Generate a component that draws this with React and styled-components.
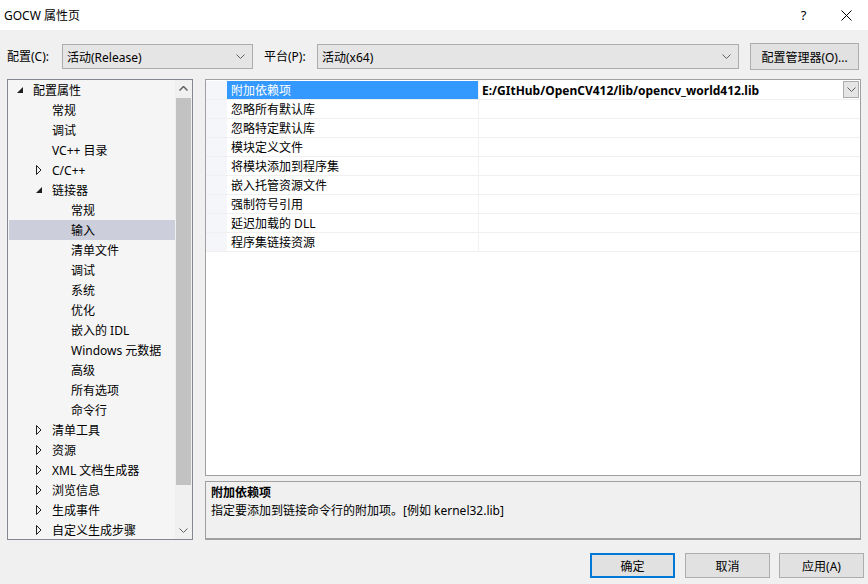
import React from "react";
import styled, { createGlobalStyle } from "styled-components";

const GlobalStyle = createGlobalStyle`
  html, body {
    margin: 0;
    padding: 0;
    background: #f0f0f0;
  }
  * {
    box-sizing: border-box;
  }
`;

const FONT = `"Noto Sans", "Noto Sans CJK SC", sans-serif`;

const Window = styled.div`
  width: 868px;
  height: 584px;
  background: #f0f0f0;
  font-family: ${FONT};
  font-size: 12px;
  color: #000;
  display: flex;
  flex-direction: column;
  overflow: hidden;
`;

const TitleBar = styled.div`
  height: 30px;
  background: #fff;
  display: flex;
  align-items: center;
  padding-left: 4px;
`;

const Title = styled.div`
  flex: 1;
  font-size: 12px;
`;

const TitleButton = styled.div`
  width: 43px;
  height: 30px;
  display: flex;
  align-items: center;
  justify-content: center;
  font-size: 13px;
`;

const Toolbar = styled.div`
  height: 49px;
  padding: 13px 0 0 7px;
  display: flex;
  align-items: flex-start;
`;

const Label = styled.div`
  width: ${({ $w }) => $w}px;
  margin-left: ${({ $ml }) => $ml || 0}px;
  height: 27px;
  line-height: 27px;
`;

const Combo = styled.div`
  width: ${({ $w }) => $w}px;
  height: 25px;
  margin-top: 1px;
  background: #e5e5e5;
  border: 1px solid #acacac;
  display: flex;
  align-items: center;
  padding: 0 7px 0 4px;
`;

const ComboText = styled.div`
  flex: 1;
`;

const Button = styled.div`
  width: ${({ $w }) => $w}px;
  height: ${({ $h }) => $h || 25}px;
  margin-left: ${({ $ml }) => $ml || 0}px;
  background: #e1e1e1;
  border: ${({ $primary }) => ($primary ? "2px solid #0078d7" : "1px solid #adadad")};
  display: flex;
  align-items: center;
  justify-content: center;
`;

const Main = styled.div`
  display: flex;
  gap: 12px;
  padding: 0 7px;
`;

const TreePanel = styled.div`
  width: 186px;
  height: 461px;
  border: 1px solid #828790;
  background: #f5f5f5;
  display: flex;
`;

const TreeList = styled.div`
  flex: 1;
  padding-left: 1px;
  overflow: hidden;
`;

const TreeRow = styled.div`
  height: 20px;
  display: flex;
  align-items: center;
  padding-left: ${({ $level }) => 5 + $level * 19}px;
  background: ${({ $selected }) => ($selected ? "#cccedb" : "transparent")};
  white-space: nowrap;
`;

const Expander = styled.div`
  width: 19px;
  height: 20px;
  display: flex;
  align-items: center;
  padding-left: 3px;
`;

const ScrollBar = styled.div`
  width: 17px;
  background: #f0f0f0;
  display: flex;
  flex-direction: column;
  align-items: center;
`;

const ScrollArrow = styled.div`
  height: 17px;
  width: 17px;
  display: flex;
  align-items: center;
  justify-content: center;
`;

const ScrollThumb = styled.div`
  width: 15px;
  height: 387px;
  margin-top: 1px;
  background: #c2c2c2;
`;

const ScrollTrack = styled.div`
  flex: 1;
`;

const RightColumn = styled.div`
  width: 656px;
  display: flex;
  flex-direction: column;
  gap: 5px;
`;

const GridPanel = styled.div`
  height: 397px;
  border: 1px solid #a0a0a0;
  background: #fff;
  padding-top: 1px;
`;

const GridRow = styled.div`
  display: flex;
  height: 19px;
  border-bottom: 1px solid #f0f0f0;
`;

const Gutter = styled.div`
  width: 21px;
  background: #f4f6fa;
`;

const NameCell = styled.div`
  width: 252px;
  padding: 1px 0 0 4px;
  line-height: 17px;
  background: ${({ $selected }) => ($selected ? "#3399ff" : "#fff")};
  color: ${({ $selected }) => ($selected ? "#fff" : "#000")};
  border-right: 1px solid #f0f0f0;
`;

const ValueCell = styled.div`
  flex: 1;
  display: flex;
  padding-left: 3px;
  font-weight: bold;
`;

const ValueText = styled.div`
  flex: 1;
  padding-top: 1px;
  line-height: 17px;
`;

const DropButton = styled.div`
  width: 16px;
  height: 17px;
  margin-right: 1px;
  background: #e5e5e5;
  border: 1px solid #acacac;
  display: flex;
  align-items: center;
  justify-content: center;
`;

const DescPanel = styled.div`
  height: 59px;
  border: 1px solid #a0a0a0;
  border-bottom-width: 2px;
  padding: 2px 5px;
  line-height: 18px;
`;

const DescTitle = styled.div`
  font-weight: bold;
`;

const Footer = styled.div`
  display: flex;
  justify-content: flex-end;
  padding: 13px 4px 0 0;
`;

const Chevron = ({ color = "#606060" }) => (
  <svg width="9" height="5" viewBox="0 0 9 5">
    <polyline points="0.5,0.5 4.5,4.5 8.5,0.5" fill="none" stroke={color} strokeWidth="1" />
  </svg>
);

const ExpandedIcon = () => (
  <svg width="7" height="7" viewBox="0 0 7 7">
    <polygon points="6,0 6,6 0,6" fill="#1e1e1e" />
  </svg>
);

const CollapsedIcon = () => (
  <svg width="6" height="10" viewBox="0 0 6 10">
    <polygon points="0.5,0.5 5,5 0.5,9.5" fill="none" stroke="#1e1e1e" strokeWidth="1" />
  </svg>
);

const treeItems = [
  { label: "配置属性", level: 0, state: "open" },
  { label: "常规", level: 1 },
  { label: "调试", level: 1 },
  { label: "VC++ 目录", level: 1 },
  { label: "C/C++", level: 1, state: "closed" },
  { label: "链接器", level: 1, state: "open" },
  { label: "常规", level: 2 },
  { label: "输入", level: 2, selected: true },
  { label: "清单文件", level: 2 },
  { label: "调试", level: 2 },
  { label: "系统", level: 2 },
  { label: "优化", level: 2 },
  { label: "嵌入的 IDL", level: 2 },
  { label: "Windows 元数据", level: 2 },
  { label: "高级", level: 2 },
  { label: "所有选项", level: 2 },
  { label: "命令行", level: 2 },
  { label: "清单工具", level: 1, state: "closed" },
  { label: "资源", level: 1, state: "closed" },
  { label: "XML 文档生成器", level: 1, state: "closed" },
  { label: "浏览信息", level: 1, state: "closed" },
  { label: "生成事件", level: 1, state: "closed" },
  { label: "自定义生成步骤", level: 1, state: "closed" },
];

const properties = [
  { name: "附加依赖项", value: "E:/GItHub/OpenCV412/lib/opencv_world412.lib", selected: true },
  { name: "忽略所有默认库" },
  { name: "忽略特定默认库" },
  { name: "模块定义文件" },
  { name: "将模块添加到程序集" },
  { name: "嵌入托管资源文件" },
  { name: "强制符号引用" },
  { name: "延迟加载的 DLL" },
  { name: "程序集链接资源" },
];

function App() {
  return (
    <Window>
      <GlobalStyle />
      <TitleBar>
        <Title>GOCW 属性页</Title>
        <TitleButton>?</TitleButton>
        <TitleButton>
          <svg width="11" height="11" viewBox="0 0 11 11">
            <path d="M0.5 0.5 L10.5 10.5 M10.5 0.5 L0.5 10.5" stroke="#000" strokeWidth="1" />
          </svg>
        </TitleButton>
      </TitleBar>

      <Toolbar>
        <Label $w={55}>配置(C):</Label>
        <Combo $w={191}>
          <ComboText>活动(Release)</ComboText>
          <Chevron />
        </Combo>
        <Label $w={53} $ml={11}>平台(P):</Label>
        <Combo $w={422}>
          <ComboText>活动(x64)</ComboText>
          <Chevron />
        </Combo>
        <Button $w={109} $h={27} $ml={11}>配置管理器(O)...</Button>
      </Toolbar>

      <Main>
        <TreePanel>
          <TreeList>
            {treeItems.map((item, i) => (
              <TreeRow key={i} $level={item.level} $selected={item.selected}>
                <Expander>
                  {item.state === "open" && <ExpandedIcon />}
                  {item.state === "closed" && <CollapsedIcon />}
                </Expander>
                {item.label}
              </TreeRow>
            ))}
          </TreeList>
          <ScrollBar>
            <ScrollArrow>
              <svg width="9" height="5" viewBox="0 0 9 5">
                <polyline points="0.5,4.5 4.5,0.5 8.5,4.5" fill="none" stroke="#606060" strokeWidth="1.5" />
              </svg>
            </ScrollArrow>
            <ScrollThumb />
            <ScrollTrack />
            <ScrollArrow>
              <Chevron />
            </ScrollArrow>
          </ScrollBar>
        </TreePanel>

        <RightColumn>
          <GridPanel>
            {properties.map((p, i) => (
              <GridRow key={i}>
                <Gutter />
                <NameCell $selected={p.selected}>{p.name}</NameCell>
                <ValueCell>
                  <ValueText>{p.value}</ValueText>
                  {p.selected && (
                    <DropButton>
                      <Chevron />
                    </DropButton>
                  )}
                </ValueCell>
              </GridRow>
            ))}
          </GridPanel>
          <DescPanel>
            <DescTitle>附加依赖项</DescTitle>
            <div>指定要添加到链接命令行的附加项。[例如 kernel32.lib]</div>
          </DescPanel>
        </RightColumn>
      </Main>

      <Footer>
        <Button $w={85} $primary>确定</Button>
        <Button $w={85} $ml={10}>取消</Button>
        <Button $w={85} $ml={9}>应用(A)</Button>
      </Footer>
    </Window>
  );
}

export default App;
